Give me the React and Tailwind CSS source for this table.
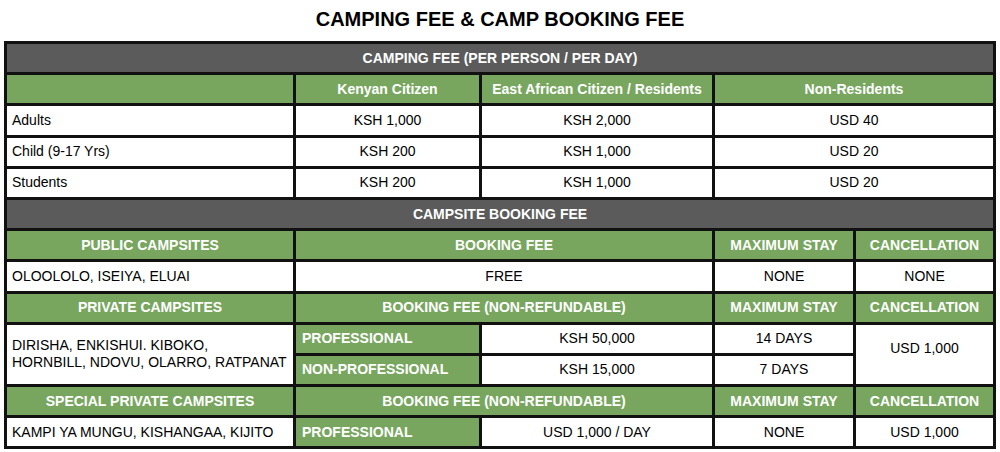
import React from 'react';

const dark = 'bg-[#5b5b5b] text-white font-bold flex items-center justify-center';
const green = 'bg-[#78a65f] text-white font-bold flex items-center justify-center';
const greenLeft = 'bg-[#78a65f] text-white font-bold flex items-center pl-[6px]';
const cell = 'bg-white text-black flex items-center justify-center';
const cellLeft = 'bg-white text-black flex items-center pl-[5px]';

const fees = [
  ['Adults', 'KSH 1,000', 'KSH 2,000', 'USD 40'],
  ['Child (9-17 Yrs)', 'KSH 200', 'KSH 1,000', 'USD 20'],
  ['Students', 'KSH 200', 'KSH 1,000', 'USD 20'],
];

const SiteHeader = ({ title, fee }) => (
  <>
    <div className={green}>{title}</div>
    <div className={`${green} col-span-2`}>{fee}</div>
    <div className={green}>MAXIMUM STAY</div>
    <div className={green}>CANCELLATION</div>
  </>
);

export default function App() {
  return (
    <div className="w-[1000px] h-[452px] bg-white font-['Liberation_Sans',Arial,sans-serif] text-[14px]">
      <div className="h-[41px] pb-[3px] flex items-center justify-center text-[20px] font-bold text-black">
        CAMPING FEE &amp; CAMP BOOKING FEE
      </div>

      <div className="mx-auto w-[992px] grid grid-cols-[286px_183px_230px_138px_137px] auto-rows-[28.2px] gap-[3px] p-[3px] bg-[#111]">
        {/* camping fee */}
        <div className={`${dark} col-span-5`}>CAMPING FEE (PER PERSON / PER DAY)</div>
        <div className={green}></div>
        <div className={green}>Kenyan Citizen</div>
        <div className={green}>East African Citizen / Residents</div>
        <div className={`${green} col-span-2`}>Non-Residents</div>
        {fees.map((r) => (
          <React.Fragment key={r[0]}>
            <div className={cellLeft}>{r[0]}</div>
            <div className={cell}>{r[1]}</div>
            <div className={cell}>{r[2]}</div>
            <div className={`${cell} col-span-2`}>{r[3]}</div>
          </React.Fragment>
        ))}

        {/* campsite booking */}
        <div className={`${dark} col-span-5`}>CAMPSITE BOOKING FEE</div>

        <SiteHeader title="PUBLIC CAMPSITES" fee="BOOKING FEE" />
        <div className={cellLeft}>OLOOLOLO, ISEIYA, ELUAI</div>
        <div className={`${cell} col-span-2`}>FREE</div>
        <div className={cell}>NONE</div>
        <div className={cell}>NONE</div>

        <SiteHeader title="PRIVATE CAMPSITES" fee="BOOKING FEE (NON-REFUNDABLE)" />
        <div className={`${cellLeft} row-span-2 leading-[17px]`}>
          DIRISHA, ENKISHUI. KIBOKO,<br />HORNBILL, NDOVU, OLARRO, RATPANAT
        </div>
        <div className={greenLeft}>PROFESSIONAL</div>
        <div className={cell}>KSH 50,000</div>
        <div className={cell}>14 DAYS</div>
        <div className={`${cell} row-span-2 pb-[11px]`}>USD 1,000</div>
        <div className={greenLeft}>NON-PROFESSIONAL</div>
        <div className={cell}>KSH 15,000</div>
        <div className={cell}>7 DAYS</div>

        <SiteHeader title="SPECIAL PRIVATE CAMPSITES" fee="BOOKING FEE (NON-REFUNDABLE)" />
        <div className={cellLeft}>KAMPI YA MUNGU, KISHANGAA, KIJITO</div>
        <div className={greenLeft}>PROFESSIONAL</div>
        <div className={cell}>USD 1,000 / DAY</div>
        <div className={cell}>NONE</div>
        <div className={cell}>USD 1,000</div>
      </div>
    </div>
  );
}
